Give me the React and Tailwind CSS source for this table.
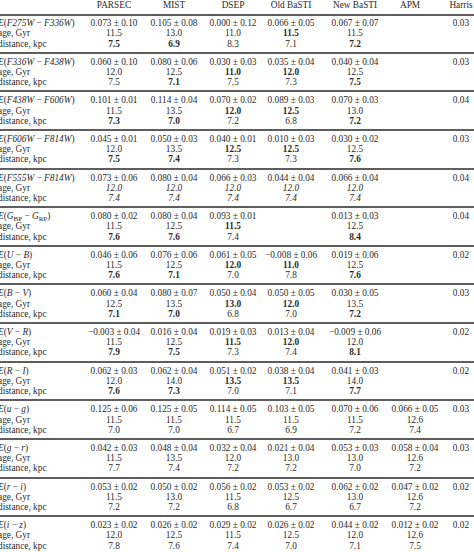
import React from "react";

const cols = "grid grid-cols-[86px_60px_60px_58px_58px_70px_50px_42px]";

const m = "−";

// "*" = bold, "_" = italic
const groups = [
  {
    label: (<><i>E</i>(<i>F275W</i> {m} <i>F336W</i>)</>),
    cells: [["0.073 ± 0.10", "11.5", "*7.5"], ["0.105 ± 0.08", "13.0", "*6.9"], ["0.000 ± 0.12", "11.0", "8.3"], ["0.066 ± 0.05", "*11.5", "7.1"], ["0.067 ± 0.07", "11.5", "*7.2"], null, ["0.03"]],
  },
  {
    label: (<><i>E</i>(<i>F336W</i> {m} <i>F438W</i>)</>),
    cells: [["0.060 ± 0.10", "12.0", "7.5"], ["0.080 ± 0.06", "12.5", "*7.1"], ["0.030 ± 0.03", "*11.0", "7.5"], ["0.035 ± 0.04", "*12.0", "7.3"], ["0.040 ± 0.04", "12.5", "*7.5"], null, ["0.03"]],
  },
  {
    label: (<><i>E</i>(<i>F438W</i> {m} <i>F606W</i>)</>),
    cells: [["0.101 ± 0.01", "11.5", "*7.3"], ["0.114 ± 0.04", "13.5", "*7.0"], ["0.070 ± 0.02", "*12.0", "7.2"], ["0.089 ± 0.03", "*12.5", "6.8"], ["0.070 ± 0.03", "13.0", "*7.2"], null, ["0.04"]],
  },
  {
    label: (<><i>E</i>(<i>F606W</i> {m} <i>F814W</i>)</>),
    cells: [["0.045 ± 0.01", "12.0", "*7.5"], ["0.050 ± 0.03", "13.5", "*7.4"], ["0.040 ± 0.01", "*12.5", "7.3"], ["0.010 ± 0.03", "*12.5", "7.3"], ["0.030 ± 0.02", "12.5", "*7.6"], null, ["0.03"]],
  },
  {
    label: (<><i>E</i>(<i>F555W</i> {m} <i>F814W</i>)</>),
    cells: [["0.073 ± 0.06", "_12.0", "_7.4"], ["0.080 ± 0.04", "_12.0", "_7.4"], ["0.066 ± 0.03", "_12.0", "_7.4"], ["0.044 ± 0.04", "_12.0", "_7.4"], ["0.066 ± 0.04", "_12.0", "_7.4"], null, ["0.04"]],
  },
  {
    label: (<><i>E</i>(<i>G</i><sub>BP</sub> {m} <i>G</i><sub>RP</sub>)</>),
    cells: [["0.080 ± 0.02", "11.5", "*7.6"], ["0.080 ± 0.04", "12.5", "*7.6"], ["0.093 ± 0.01", "*11.5", "7.4"], null, ["0.013 ± 0.03", "12.5", "*8.4"], null, ["0.04"]],
  },
  {
    label: (<><i>E</i>(<i>U</i> {m} <i>B</i>)</>),
    cells: [["0.046 ± 0.06", "11.5", "*7.6"], ["0.076 ± 0.06", "12.5", "*7.1"], ["0.061 ± 0.05", "*12.0", "7.0"], ["−0.008 ± 0.06", "*11.0", "7.8"], ["0.019 ± 0.06", "12.5", "*7.6"], null, ["0.02"]],
  },
  {
    label: (<><i>E</i>(<i>B</i> {m} <i>V</i>)</>),
    cells: [["0.060 ± 0.04", "12.5", "*7.1"], ["0.080 ± 0.07", "13.5", "*7.0"], ["0.050 ± 0.04", "*13.0", "6.8"], ["0.050 ± 0.05", "*12.0", "7.0"], ["0.030 ± 0.05", "13.5", "*7.2"], null, ["0.03"]],
  },
  {
    label: (<><i>E</i>(<i>V</i> {m} <i>R</i>)</>),
    cells: [["−0.003 ± 0.04", "11.5", "*7.9"], ["0.016 ± 0.04", "12.5", "*7.5"], ["0.019 ± 0.03", "*11.5", "7.3"], ["0.013 ± 0.04", "*12.0", "7.4"], ["−0.009 ± 0.06", "12.0", "*8.1"], null, ["0.02"]],
  },
  {
    label: (<><i>E</i>(<i>R</i> {m} <i>I</i>)</>),
    cells: [["0.062 ± 0.03", "12.0", "*7.6"], ["0.062 ± 0.04", "14.0", "*7.3"], ["0.051 ± 0.02", "*13.5", "7.0"], ["0.038 ± 0.04", "*13.5", "7.1"], ["0.041 ± 0.03", "14.0", "*7.7"], null, ["0.02"]],
  },
  {
    label: (<><i>E</i>(<i>u</i> {m} <i>g</i>)</>),
    cells: [["0.125 ± 0.06", "11.5", "7.0"], ["0.125 ± 0.05", "11.5", "7.0"], ["0.114 ± 0.05", "11.5", "6.7"], ["0.103 ± 0.05", "11.5", "6.9"], ["0.070 ± 0.06", "11.5", "7.2"], ["0.066 ± 0.05", "12.6", "7.4"], ["0.03"]],
  },
  {
    label: (<><i>E</i>(<i>g</i> {m} <i>r</i>)</>),
    cells: [["0.042 ± 0.03", "11.5", "7.7"], ["0.048 ± 0.04", "13.5", "7.4"], ["0.032 ± 0.04", "12.0", "7.2"], ["0.021 ± 0.04", "13.0", "7.2"], ["0.053 ± 0.03", "13.0", "7.0"], ["0.058 ± 0.04", "12.6", "7.2"], ["0.03"]],
  },
  {
    label: (<><i>E</i>(<i>r</i> {m} <i>i</i>)</>),
    cells: [["0.053 ± 0.02", "11.5", "7.2"], ["0.050 ± 0.02", "13.0", "7.2"], ["0.056 ± 0.02", "11.5", "6.8"], ["0.053 ± 0.02", "12.5", "6.7"], ["0.062 ± 0.02", "13.0", "6.7"], ["0.047 ± 0.02", "12.6", "7.2"], ["0.02"]],
  },
  {
    label: (<><i>E</i>(<i>i</i> {m} <i>z</i>)</>),
    cells: [["0.023 ± 0.02", "12.0", "7.8"], ["0.026 ± 0.02", "12.5", "7.6"], ["0.029 ± 0.02", "11.5", "7.4"], ["0.026 ± 0.02", "12.5", "7.0"], ["0.044 ± 0.02", "12.0", "7.1"], ["0.012 ± 0.02", "12.6", "7.5"], ["0.02"]],
  },
];

const Val = ({ v }) => {
  if (!v) return <span>&nbsp;</span>;
  if (v[0] === "*") return <span className="font-bold">{v.slice(1)}</span>;
  if (v[0] === "_") return <span className="italic">{v.slice(1)}</span>;
  return <span>{v}</span>;
};

const Group = ({ g, first }) => {
  const rowLabels = [g.label, "age, Gyr", "distance, kpc"];
  return (
    <div className={`border-t-2 border-[#5e5e5e] ${first ? "pt-[2px]" : "pt-[3px]"} pb-[3px]`}>
      {[0, 1, 2].map((r) => (
        <div key={r} className={cols}>
          <div className="whitespace-nowrap">{rowLabels[r]}</div>
          {g.cells.map((c, i) => (
            <div key={i} className="text-center whitespace-nowrap">
              <Val v={c ? c[r] : null} />
            </div>
          ))}
        </div>
      ))}
    </div>
  );
};

const App = () => {
  return (
    <div className="w-[474px] h-[552px] overflow-hidden bg-white">
      <div className="w-[484px] -ml-[2px] font-['Liberation_Serif',serif] text-[9.3px] leading-[10.2px] text-[#2b2b2b]">
        <div className={`${cols} pb-[4px]`}>
          <div></div>
          <div className="text-center">PARSEC</div>
          <div className="text-center">MIST</div>
          <div className="text-center">DSEP</div>
          <div className="text-center">Old BaSTI</div>
          <div className="text-center">New BaSTI</div>
          <div className="text-center pr-[10px]">APM</div>
          <div className="text-center">Harris</div>
        </div>
        {groups.map((g, i) => (
          <Group key={i} g={g} first={i === 0} />
        ))}
      </div>
    </div>
  );
};

export default App;
